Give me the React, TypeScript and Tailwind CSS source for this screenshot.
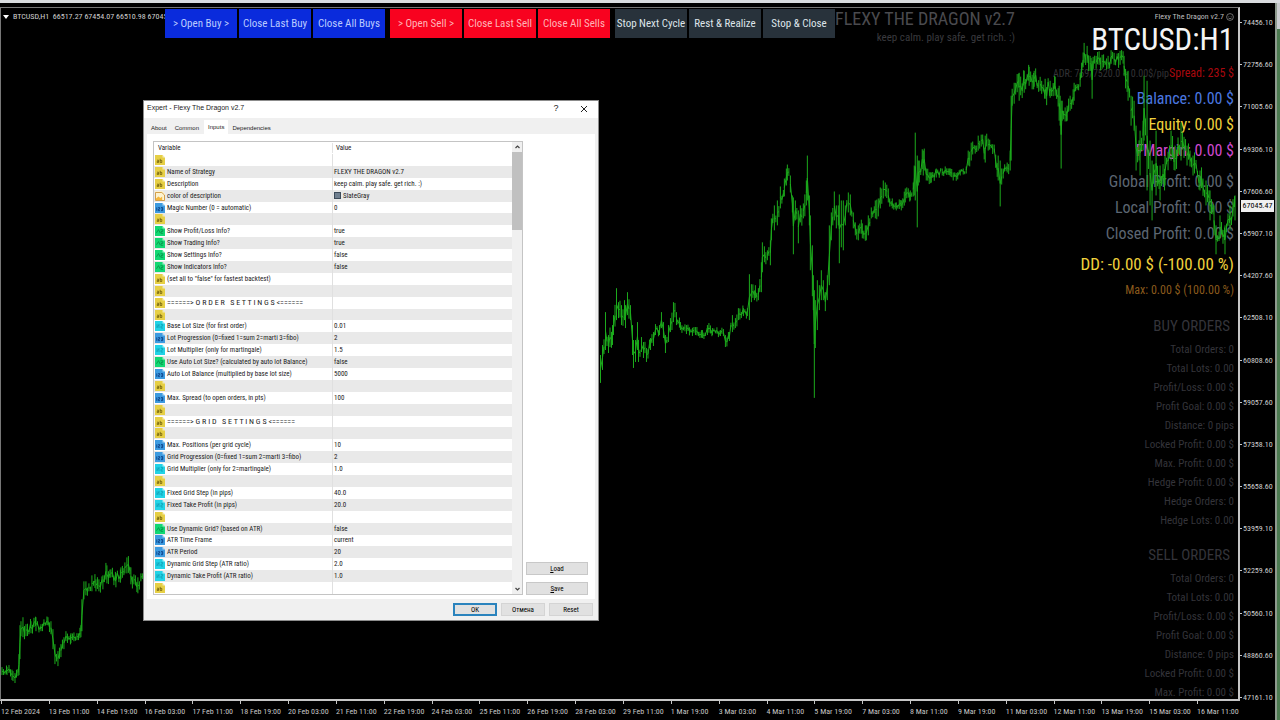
import React from "react";

type Bar = [number, number, number];

const EARLY: Bar[] = [
  [1, 668, 676], [6, 668, 676], [8, 666, 674], [12, 672, 682], [14, 674, 684], [17, 670, 677], [18, 655, 676], [19, 626, 660],
  [20, 622, 637], [22, 618, 638], [25, 625, 637], [30, 622, 634], [35, 618, 632], [40, 625, 632], [47, 618, 626], [50, 622, 635],
  [52, 630, 650], [54, 645, 665], [57, 652, 667], [60, 645, 658], [63, 638, 650], [65, 632, 642], [70, 634, 644], [76, 634, 641],
  [80, 626, 638], [81, 600, 632], [83, 582, 600], [85, 582, 596], [88, 584, 592], [91, 576, 592], [95, 580, 592], [98, 580, 592],
  [102, 576, 590], [106, 566, 584], [110, 570, 578], [115, 574, 588], [120, 568, 580], [124, 563, 574], [126, 558, 574],
  [130, 568, 585], [133, 575, 585], [137, 578, 594], [140, 574, 582], [144, 570, 580],
];

const LATE: Bar[] = [
  [600, 355, 383], [602, 345, 370], [605, 312, 350], [608, 335, 353], [612, 325, 345], [613, 315, 335], [616, 288, 320],
  [618, 302, 318], [621, 305, 325], [624, 300, 320], [625, 305, 328], [627, 292, 315], [630, 305, 320], [632, 325, 355],
  [633, 340, 368], [635, 340, 362], [637, 322, 350], [638, 340, 362], [641, 337, 352], [643, 342, 358], [646, 348, 362],
  [650, 338, 350], [653, 332, 346], [655, 324, 335], [659, 325, 335], [661, 312, 328], [663, 322, 338], [665, 335, 353],
  [668, 325, 342], [670, 318, 332], [673, 302, 322], [676, 312, 325], [680, 322, 330], [686, 325, 334], [695, 327, 335],
  [702, 330, 338], [707, 325, 335], [712, 328, 335], [720, 330, 336], [723, 329, 336], [725, 335, 347], [729, 332, 341],
  [732, 315, 332], [735, 318, 328], [738, 308, 320], [743, 308, 316], [747, 308, 316], [749, 274, 320], [751, 284, 302],
  [755, 285, 298], [758, 288, 300], [761, 262, 292], [762, 242, 272], [764, 246, 262], [767, 250, 260], [770, 240, 265],
  [771, 218, 240], [774, 205, 230], [777, 200, 225], [780, 186, 208], [784, 178, 196], [786, 168, 185], [787, 164, 180],
  [790, 175, 192], [792, 195, 212], [793, 197, 254], [795, 200, 220], [798, 210, 243], [800, 205, 222], [803, 203, 218],
  [806, 180, 205], [807, 155, 200], [809, 195, 225], [810, 215, 270], [812, 245, 296], [813, 275, 310], [814, 290, 398],
  [815, 300, 348], [817, 280, 330], [819, 285, 310], [821, 270, 300], [823, 280, 300], [825, 292, 311], [827, 275, 300],
  [829, 225, 285], [831, 212, 240], [834, 191, 220], [836, 205, 228], [838, 205, 225], [839, 194, 263], [841, 200, 247],
  [843, 200, 250], [845, 205, 225], [848, 192, 212], [850, 194, 215], [853, 212, 228], [855, 222, 235], [858, 225, 240],
  [862, 223, 238], [866, 225, 240], [868, 215, 235], [871, 207, 218], [875, 200, 218], [878, 198, 216], [880, 187, 208],
  [883, 180, 198], [885, 182, 196], [888, 188, 202], [892, 198, 208], [896, 202, 210], [901, 200, 210], [905, 188, 202],
  [910, 190, 200], [913, 182, 196], [914, 165, 195], [915, 132, 200], [917, 155, 227], [918, 160, 185], [919, 160, 182],
  [923, 150, 175], [924, 148, 170], [926, 168, 180], [931, 172, 182], [936, 168, 177], [942, 168, 175], [950, 168, 176],
  [953, 172, 180], [960, 169, 175], [966, 166, 173], [968, 150, 165], [971, 142, 160], [975, 145, 153], [978, 135, 150],
  [981, 134, 146], [985, 135, 162], [988, 138, 150], [994, 144, 152], [998, 155, 180], [1000, 160, 206], [1003, 168, 178],
  [1007, 162, 172], [1010, 150, 170], [1011, 95, 160], [1012, 88, 105], [1014, 82, 103], [1019, 72, 100], [1024, 70, 92],
  [1029, 66, 85], [1034, 70, 86], [1040, 76, 90], [1045, 78, 98], [1050, 80, 97], [1055, 76, 95], [1059, 85, 120],
  [1060, 95, 125], [1061, 100, 168], [1062, 100, 120], [1067, 105, 120], [1070, 95, 110], [1074, 82, 100], [1080, 72, 86],
  [1084, 42, 62], [1087, 45, 62], [1090, 55, 70], [1091, 57, 70], [1092, 60, 98], [1093, 56, 68], [1096, 55, 68],
  [1102, 54, 68], [1108, 55, 68], [1114, 52, 64], [1120, 50, 64], [1124, 55, 75], [1128, 70, 100], [1131, 95, 125],
  [1134, 100, 130], [1136, 125, 170], [1140, 130, 175], [1143, 120, 150], [1144, 75, 140], [1147, 80, 190], [1150, 140, 205],
  [1152, 160, 220], [1156, 130, 195], [1160, 165, 200], [1165, 155, 185], [1171, 130, 160], [1175, 145, 170],
  [1181, 122, 160], [1187, 145, 165], [1193, 155, 175], [1200, 170, 190], [1206, 180, 205], [1210, 190, 220],
  [1214, 205, 235], [1216, 225, 254], [1220, 215, 238], [1225, 225, 254], [1230, 205, 230], [1235, 195, 220],
];

function toPath(bars: Bar[]): string {
  let d = "";
  let seed = 7;
  for (let i = 0; i < bars.length; i++) {
    const [x, hi, lo] = bars[i];
    d += `M${x} ${hi}V${lo}`;
    const next = bars[i + 1];
    if (!next) break;
    const gap = next[0] - x;
    if (gap <= 2) {
      d += `M${x} ${(hi + lo) / 2}L${next[0]} ${(next[1] + next[2]) / 2}`;
      continue;
    }
    let px = x;
    let py = (hi + lo) / 2;
    for (let k = 1.5; k < gap; k += 1.5) {
      seed = (seed * 16807) % 2147483647;
      const r = (seed % 1000) / 1000;
      const t = k / gap;
      const h = hi + (next[1] - hi) * t;
      const l = lo + (next[2] - lo) * t;
      const span = Math.min(l - h, 20);
      const mid = (h + l) / 2 + (r - 0.5) * span * 0.8;
      const half = span * (0.15 + 0.4 * ((r * 7) % 1));
      d += `M${px} ${py}L${x + k} ${mid}M${x + k} ${mid - half}V${mid + half}`;
      px = x + k;
      py = mid;
    }
  }
  return d;
}

const PRICE_PATH = toPath(EARLY) + toPath(LATE);

const TIMES = [
  "12 Feb 2024", "13 Feb 11:00", "14 Feb 19:00", "16 Feb 03:00", "17 Feb 11:00", "18 Feb 19:00", "20 Feb 03:00",
  "21 Feb 11:00", "22 Feb 19:00", "24 Feb 03:00", "25 Feb 11:00", "26 Feb 19:00", "28 Feb 03:00", "29 Feb 11:00",
  "1 Mar 19:00", "3 Mar 03:00", "4 Mar 11:00", "5 Mar 19:00", "7 Mar 03:00", "8 Mar 11:00", "9 Mar 19:00",
  "11 Mar 03:00", "12 Mar 11:00", "13 Mar 19:00", "15 Mar 03:00", "16 Mar 11:00",
];

const PRICES = [
  "74456.10", "72756.60", "71005.60", "69306.10", "67606.60", "65907.10", "64207.60", "62508.10", "60808.60",
  "59057.60", "57358.10", "55658.60", "53959.10", "52259.60", "50560.10", "48860.60", "47161.10",
];

const BUY_LINES = [
  "Total Orders: 0", "Total Lots: 0.00", "Profit/Loss: 0.00 $", "Profit Goal: 0.00 $", "Distance: 0 pips",
  "Locked Profit: 0.00 $", "Max. Profit: 0.00 $", "Hedge Profit: 0.00 $", "Hedge Orders: 0", "Hedge Lots: 0.00",
];

const SELL_LINES = BUY_LINES.slice(0, 7);

type Kind = "text" | "color" | "int" | "bool" | "real";

const INPUTS: [Kind, string, string][] = [
  ["text", "", ""],
  ["text", "Name of Strategy", "FLEXY THE DRAGON v2.7"],
  ["text", "Description", "keep calm. play safe. get rich. :)"],
  ["color", "color of description", "SlateGray"],
  ["int", "Magic Number (0 = automatic)", "0"],
  ["text", "", ""],
  ["bool", "Show Profit/Loss Info?", "true"],
  ["bool", "Show Trading Info?", "true"],
  ["bool", "Show Settings Info?", "false"],
  ["bool", "Show Indicators Info?", "false"],
  ["text", "(set all to \"false\" for fastest backtest)", ""],
  ["text", "", ""],
  ["text", "======> O R D E R   S E T T I N G S <======", ""],
  ["text", "", ""],
  ["real", "Base Lot Size (for first order)", "0.01"],
  ["int", "Lot Progression (0=fixed 1=sum 2=marti 3=fibo)", "2"],
  ["real", "Lot Multiplier (only for martingale)", "1.5"],
  ["bool", "Use Auto Lot Size? (calculated by auto lot Balance)", "false"],
  ["int", "Auto Lot Balance (multiplied by base lot size)", "5000"],
  ["text", "", ""],
  ["int", "Max. Spread (to open orders, in pts)", "100"],
  ["text", "", ""],
  ["text", "======> G R I D   S E T T I N G S <======", ""],
  ["text", "", ""],
  ["int", "Max. Positions (per grid cycle)", "10"],
  ["int", "Grid Progression (0=fixed 1=sum 2=marti 3=fibo)", "2"],
  ["real", "Grid Multiplier (only for 2=martingale)", "1.0"],
  ["text", "", ""],
  ["real", "Fixed Grid Step (in pips)", "40.0"],
  ["real", "Fixed Take Profit (in pips)", "20.0"],
  ["text", "", ""],
  ["bool", "Use Dynamic Grid? (based on ATR)", "false"],
  ["int", "ATR Time Frame", "current"],
  ["int", "ATR Period", "20"],
  ["real", "Dynamic Grid Step (ATR ratio)", "2.0"],
  ["real", "Dynamic Take Profit (ATR ratio)", "1.0"],
  ["text", "", ""],
];

const KIND_FILL: Record<Kind, string> = {
  text: "#e6cf45",
  color: "#fdf3d0",
  int: "#3d9be0",
  bool: "#12d873",
  real: "#22d3e6",
};

function KindIcon({ kind }: { kind: Kind }) {
  return (
    <svg viewBox="0 0 10 10" className="h-[10px] w-[10px] shrink-0" aria-hidden="true">
      <path d="M0 0H7.5L10 2.5V10H0Z" fill={KIND_FILL[kind]} />
      {kind !== "color" && <path d="M7.5 0V2.5H10Z" fill="#fff" opacity=".6" />}
      {kind === "text" && (
        <path d="M2 5.2h1.6v2.3H2.2V6.4h1.4M5.2 3.8v3.7h1.6V5.4H5.2" fill="none" stroke="#6f5f0c" strokeWidth=".8" />
      )}
      {kind === "int" && (
        <path d="M1.8 4.4v3.4M3.2 4.6h1.5v1.5H3.4v1.5h1.5M6 4.6h1.7v3H6M6.3 6.1h1.4" fill="none" stroke="#0b3f86" strokeWidth=".9" />
      )}
      {kind === "bool" && (
        <path d="M1.5 6.8 3.5 3.6l1.8 3.6M5.4 3.8h2.4v1.7H6v1.8h2.2" fill="none" stroke="#08964c" strokeWidth=".9" />
      )}
      {kind === "real" && (
        <path d="M2 3.2v3.6l2-3.4v3.6M5.8 3.4h1.8v1.7H6v1.9h2" fill="none" stroke="#0f9fb4" strokeWidth=".8" />
      )}
      {kind === "color" && (
        <>
          <path d="M.5 1.5H6.8L9.5 4V9.5H.5Z" fill="#fdf3d0" stroke="#c98a2a" strokeWidth=".8" />
          <path d="M1 7.6 3.4 5.6 5.4 7 7.2 5.4V9H1Z" fill="#f6b73c" />
        </>
      )}
    </svg>
  );
}

const ACTIONS: { label: string; tone: string }[] = [
  { label: "> Open Buy >", tone: "bg-[#0a2bdc] text-[#bccbff]" },
  { label: "Close Last Buy", tone: "bg-[#0a2bdc] text-[#bccbff]" },
  { label: "Close All Buys", tone: "bg-[#0a2bdc] text-[#bccbff] mr-[3px]" },
  { label: "> Open Sell >", tone: "bg-[#f8021f] text-[#ffb4b8]" },
  { label: "Close Last Sell", tone: "bg-[#f8021f] text-[#ffb4b8]" },
  { label: "Close All Sells", tone: "bg-[#f8021f] text-[#ffb4b8] mr-[3px]" },
  { label: "Stop Next Cycle", tone: "bg-[#28323b] text-[#dfe5ea]" },
  { label: "Rest & Realize", tone: "bg-[#28323b] text-[#dfe5ea]" },
  { label: "Stop & Close", tone: "bg-[#28323b] text-[#dfe5ea]" },
];

function Orders({ title, lines }: { title: string; lines: string[] }) {
  return (
    <section className="flex flex-col items-end text-[#34343a]">
      <h3 className="mb-1 h-5 pr-1 text-[15px] leading-5">{title}</h3>
      {lines.map((line) => (
        <p key={line} className="text-[11px] leading-[19px]">{line}</p>
      ))}
    </section>
  );
}

function DialogButton({ children, className }: { children: React.ReactNode; className: string }) {
  return (
    <button type="button" className={`h-[13px] bg-[#e1e1e1] text-center text-[7px] leading-[10px] text-black ${className}`}>
      {children}
    </button>
  );
}

function ExpertDialog() {
  return (
    <div
      role="dialog"
      aria-label="Expert - Flexy The Dragon v2.7"
      className="absolute left-[142px] top-[92px] z-30 flex w-[456px] flex-col border border-[#8c8c8c] bg-[#f0f0f0] text-[7px] text-[#1c1c1c]"
    >
      <header className="flex h-[17px] items-center bg-white pb-[2px] pl-[3px] pr-2">
        <h2 className="flex-1 font-['Liberation_Sans'] text-[7px]">Expert - Flexy The Dragon v2.7</h2>
        <button type="button" aria-label="Help" className="w-5 text-center font-['Liberation_Sans'] text-[9px]">?</button>
        <button type="button" aria-label="Close" className="flex w-6 justify-end pr-[2px]">
          <svg viewBox="0 0 8 8" className="h-2 w-2"><path d="M1 1 7 7M7 1 1 7" stroke="#222" strokeWidth="1" /></svg>
        </button>
      </header>
      <nav className="flex h-4 items-end gap-px px-1 font-['Liberation_Sans'] text-[6px] leading-3">
        <button type="button" className="px-[3px]">About</button>
        <button type="button" className="px-[4px]">Common</button>
        <button type="button" className="h-[14px] bg-white px-[4px] leading-3">Inputs</button>
        <button type="button" className="px-[3px]">Dependencies</button>
      </nav>
      <div className="mx-[3px] flex bg-white pb-1 pl-[6px] pr-[7px] pt-[7px]">
        <div className="flex w-[370px] border border-[#c4c4c4]">
          <table className="block flex-1">
            <thead className="block">
              <tr className="flex h-3 items-center text-left">
                <th className="w-[178px] pl-1 font-normal">Variable</th>
                <th className="flex-1 border-l border-[#e3e3e3] pl-[3px] font-normal">Value</th>
              </tr>
            </thead>
            <tbody className="flex h-[440px] flex-col">
              {INPUTS.map(([kind, name, value], i) => (
                <tr key={i} className={i % 2 ? "flex min-h-0 flex-1 items-stretch bg-[#e9e9e9]" : "flex min-h-0 flex-1 items-stretch bg-white"}>
                  <td className={`flex w-[178px] items-center gap-[2px] whitespace-pre pl-px leading-3 ${name.startsWith("===") ? "text-[8px]" : ""}`}>
                    <KindIcon kind={kind} />
                    {name}
                  </td>
                  <td className="flex flex-1 items-center gap-[2px] border-l border-[#e0e0e0] pl-px leading-3">
                    {kind === "color" && <span className="h-[7px] w-[7px] border border-[#3d4b5a] bg-[#708090]" />}
                    {value}
                  </td>
                </tr>
              ))}
            </tbody>
          </table>
          <div className="flex w-[10px] flex-col items-center bg-[#f0f0f0]">
            <svg viewBox="0 0 9 10" className="h-[10px] w-[9px]"><path d="M2.5 6 4.5 4l2 2" fill="none" stroke="#444" strokeWidth="1.2" /></svg>
            <div className="h-[78px] w-full bg-[#c0c0c0]" />
            <div className="flex-1" />
            <svg viewBox="0 0 9 10" className="h-[10px] w-[9px]"><path d="M2.5 4 4.5 6l2-2" fill="none" stroke="#444" strokeWidth="1.2" /></svg>
          </div>
        </div>
        <div className="flex flex-1 flex-col items-end justify-end gap-[7px]">
          <DialogButton className="w-[62px] border border-[#c8c8c8]"><u>L</u>oad</DialogButton>
          <DialogButton className="w-[62px] border border-[#c8c8c8]"><u>S</u>ave</DialogButton>
        </div>
      </div>
      <footer className="flex h-[21px] items-center justify-end gap-1 pr-[5px]">
        <DialogButton className="w-11 border-2 border-[#2a83bd] leading-[8px]">OK</DialogButton>
        <DialogButton className="w-11 border border-[#d4d4d4]">Отмена</DialogButton>
        <DialogButton className="w-11 border border-[#d4d4d4]">Reset</DialogButton>
      </footer>
    </div>
  );
}

export default function App() {
  return (
    <div className="flex h-screen flex-col overflow-hidden bg-black font-['Liberation_Sans_Narrow','Roboto_Condensed','Liberation_Sans',sans-serif]">
      <div className="h-[3px] shrink-0 bg-[#d9dcdf]" />
      <div className="flex min-h-0 flex-1">
        <div className="flex min-w-0 flex-1 flex-col pt-1">
          <div className="flex min-h-0 flex-1">
            <main className="relative min-w-0 flex-1 border-b-2 border-l border-r-2 border-t border-b-[#c6c6c6] border-l-[#777] border-r-[#c6c6c6] border-t-[#777]">
              <svg viewBox="0 7 1238 693" preserveAspectRatio="none" className="absolute inset-0 z-10 h-full w-full" aria-hidden="true">
                <path d={PRICE_PATH} fill="none" stroke="#1cab1c" strokeWidth="1" />
              </svg>
              <div className="flex h-full justify-between overflow-hidden">
                <div className="relative z-20 flex items-start">
                  <div className="flex w-[164px] items-center gap-1 overflow-hidden whitespace-nowrap pl-[2px] pt-[3px] text-[8px] leading-3 text-[#d0d0d0]">
                    <svg viewBox="0 0 6 4" className="h-1 w-[6px] shrink-0"><path d="M0 0H6L3 4Z" fill="#fff" /></svg>
                    BTCUSD,H1 &nbsp;66517.27 67454.07 66510.98 67045
                  </div>
                  <div className="flex gap-[2px] pt-px">
                    {ACTIONS.map(({ label, tone }) => (
                      <button key={label} type="button" className={`h-[29px] w-[72px] whitespace-nowrap pt-px text-center text-[11px] ${tone}`}>
                        {label}
                      </button>
                    ))}
                  </div>
                  <div className="flex flex-col items-end whitespace-nowrap text-[#4a4a4e]">
                    <h1 className="text-[18px] leading-[22px]">FLEXY THE DRAGON v2.7</h1>
                    <p className="text-[11px] leading-4 text-[#3a3a3e]">keep calm. play safe. get rich. :)</p>
                  </div>
                </div>
                <aside className="flex flex-col items-end whitespace-nowrap pr-1">
                  <p className="relative z-20 flex items-center gap-[2px] pt-1 text-[8px] leading-[10px] text-[#bdbdbd]">
                    Flexy The Dragon v2.7
                    <svg viewBox="0 0 8 8" className="h-2 w-2"><circle cx="4" cy="4" r="3.4" fill="none" stroke="#999" strokeWidth=".7" /><path d="M2.8 3v.6M5.2 3v.6M2.4 5q1.6 1.4 3.2 0" fill="none" stroke="#999" strokeWidth=".7" /></svg>
                  </p>
                  <h2 className="relative z-20 text-[31px] leading-9 text-[#f4f4f4]">BTCUSD:H1</h2>
                  <p className="flex h-[26px] items-center pt-[6px] text-[#333336]">
                    <span className="text-[10px]">ADR: 759/7520.0 ~ 0.00$/pip</span>
                    <span className="text-[12px] text-[#a8080e]">Spread: 235 $</span>
                  </p>
                  <div className="flex flex-col items-end pt-1 text-[16px] leading-[26px]">
                    <p className="text-[#4b78e0]">Balance: 0.00 $</p>
                    <p className="text-[#f0d23c]">Equity: 0.00 $</p>
                    <p className="text-[#cf49cf]">FMargin: 0.00 $</p>
                  </div>
                  <div className="flex flex-col items-end pt-[5px] text-[16px] leading-[26px] text-[#5c6672]">
                    <p>Global Profit: 0.00 $</p>
                    <p>Local Profit: 0.00 $</p>
                    <p>Closed Profit: 0.00 $</p>
                  </div>
                  <p className="pt-1 text-[17px] leading-[26px] text-[#f0d23c]">DD: -0.00 $ (-100.00 %)</p>
                  <p className="text-[12px] leading-[26px] text-[#8a5a1c]">Max: 0.00 $ (100.00 %)</p>
                  <div className="flex flex-col gap-[15px] pt-[13px]">
                    <Orders title="BUY ORDERS" lines={BUY_LINES} />
                    <Orders title="SELL ORDERS" lines={SELL_LINES} />
                  </div>
                </aside>
              </div>
              <ExpertDialog />
            </main>
          </div>
          <div className="-mr-1 flex h-[19px] shrink-0">
            {TIMES.map((t) => (
              <div key={t} className="relative min-w-0 flex-1 whitespace-nowrap pl-px pt-[5px] text-[8px] leading-3 text-[#c4c4c4]">
                <span className="absolute left-px top-0 h-[3px] w-px bg-[#c6c6c6]" />
                {t}
              </div>
            ))}
          </div>
        </div>
        <div className="relative flex w-[35px] flex-col pt-1">
          {PRICES.map((p) => (
            <div key={p} className="flex flex-1 items-start gap-px pt-[10px] text-[8px] leading-3 text-[#cfcfcf] last-of-type:h-[38px] last-of-type:flex-none">
              <span className="mt-[5px] h-px w-[2px] bg-[#c6c6c6]" />
              {p}
            </div>
          ))}
          <span className="absolute left-[1px] top-[197px] w-[33px] bg-[#f0f0f0] text-center text-[8px] leading-3 text-black">67045.47</span>
        </div>
        <div className="flex w-[5px] flex-col border-l-2 border-[#8e9a8e] bg-[#4c7a50]">
          <div className="h-[26px] bg-[#c9cccf]" />
        </div>
      </div>
    </div>
  );
}
